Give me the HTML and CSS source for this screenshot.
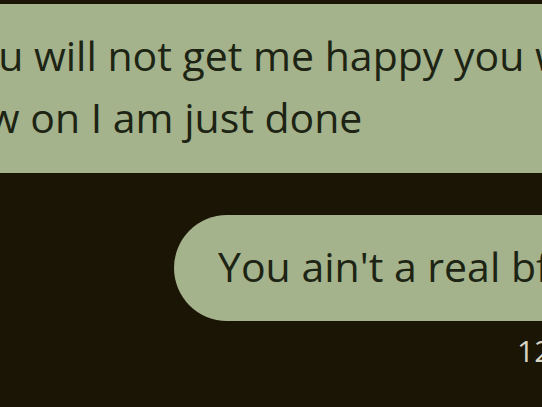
FILE: index.html
```html
<!DOCTYPE html>
<html lang="en">
<head>
    <meta charset="UTF-8">
    <meta name="viewport" content="width=device-width, initial-scale=1.0">
    <title>Chat</title>
    <link rel="stylesheet" href="styles.css">
</head>
<body>
<div class="chat">
    <div class="bubble incoming">
        <div class="line">you will not get me happy you won't</div>
        <div class="line shifted">now on I am just done</div>
    </div>
    <div class="bubble outgoing">
        <div class="line">You ain't a real bf</div>
    </div>
    <div class="time">12:40</div>
</div>
</body>
</html>
```

FILE: styles.css
```css
body {
    margin: 0;
    padding: 0;
    background-color: #1b1505;
    font-family: "Open Sans", Roboto, sans-serif;
    overflow: hidden;
    width: 542px;
    height: 407px;
}
.chat {
    display: flex;
    flex-direction: column;
    padding-top: 4px;
}
.bubble {
    background-color: #a4b38b;
    color: #1d2414;
    font-size: 41px;
    line-height: 62px;
    white-space: nowrap;
}
.incoming {
    margin-left: -80px;
    margin-right: -60px;
    padding: 20px 0 25px 33px;
}
.shifted {
    text-indent: -15px;
}
.outgoing {
    margin-top: 42px;
    margin-left: 174px;
    margin-right: -80px;
    padding: 20px 0 24px 44px;
    border-radius: 53px;
}
.time {
    margin-top: 12px;
    padding-left: 517px;
    font-size: 30px;
    line-height: 36px;
    color: #d8d4c6;
    white-space: nowrap;
}
```
